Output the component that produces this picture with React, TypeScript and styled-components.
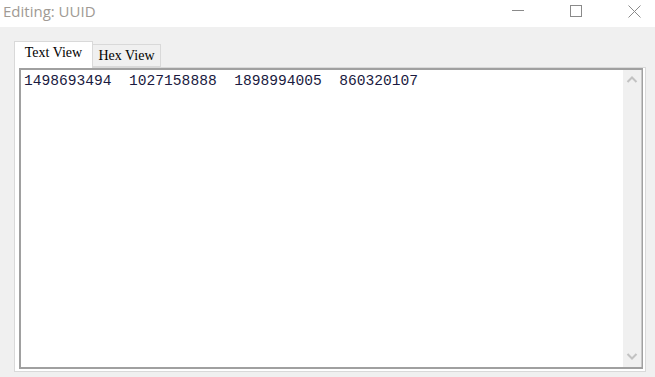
import React from 'react';
import styled, { createGlobalStyle } from 'styled-components';

const GlobalStyle = createGlobalStyle`
	html, body {
		margin: 0;
		padding: 0;
		background: #f0f0f0;
	}
`;

const values = ['1498693494', '1027158888', '1898994005', '860320107'];

const App = () => {
	return (
		<>
			<GlobalStyle />
			<Window>
				<TitleBar>
					<Title>Editing: UUID</Title>
					<Controls>
						<ControlButton aria-label="minimize">
							<svg width="12" height="12" viewBox="0 0 12 12">
								<line x1="0" y1="5.5" x2="12" y2="5.5" stroke="#8a8a8a" strokeWidth="1" />
							</svg>
						</ControlButton>
						<ControlButton aria-label="maximize">
							<svg width="12" height="12" viewBox="0 0 12 12">
								<rect x="0.5" y="0.5" width="11" height="11" fill="none" stroke="#8a8a8a" strokeWidth="1" />
							</svg>
						</ControlButton>
						<ControlButton aria-label="close">
							<svg width="13" height="13" viewBox="0 0 13 13">
								<path d="M0.5 0.5 L12.5 12.5 M12.5 0.5 L0.5 12.5" stroke="#8a8a8a" strokeWidth="1" />
							</svg>
						</ControlButton>
					</Controls>
				</TitleBar>
				<Body>
					<TabRow>
						<Tab active>Text View</Tab>
						<Tab>Hex View</Tab>
					</TabRow>
					<Panel>
						<EditBox>
							<TextArea>
								{values.map((v) => (
									<Value key={v}>{v}</Value>
								))}
							</TextArea>
							<ScrollBar>
								<svg width="18" height="18" viewBox="0 0 18 18">
									<path d="M4.5 11 L9 6.5 L13.5 11" fill="none" stroke="#c2c2c2" strokeWidth="2" />
								</svg>
								<svg width="18" height="18" viewBox="0 0 18 18">
									<path d="M4.5 7 L9 11.5 L13.5 7" fill="none" stroke="#c2c2c2" strokeWidth="2" />
								</svg>
							</ScrollBar>
						</EditBox>
					</Panel>
				</Body>
			</Window>
		</>
	);
};

const Window = styled('div')({
	width: '655px',
	height: '377px',
	background: '#f0f0f0',
	display: 'flex',
	flexDirection: 'column',
	overflow: 'hidden',
});

const TitleBar = styled('div')({
	height: '27px',
	background: '#ffffff',
	display: 'flex',
	alignItems: 'center',
	justifyContent: 'space-between',
	paddingLeft: '3px',
	flexShrink: 0,
});

const Title = styled('span')({
	fontFamily: '"Open Sans", "Noto Sans", sans-serif',
	fontSize: '15px',
	color: '#a09a94',
	marginTop: '-6px',
});

const Controls = styled('div')({
	display: 'flex',
	height: '100%',
	alignItems: 'flex-start',
	gap: '18px',
	paddingRight: '1px',
});

const ControlButton = styled.span`
	width: 40px;
	height: 22px;
	display: flex;
	align-items: center;
	justify-content: center;
`;

const Body = styled('div')({
	flex: 1,
	display: 'flex',
	flexDirection: 'column',
	padding: '14px 9px 5px 14px',
});

const TabRow = styled('div')({
	display: 'flex',
	alignItems: 'flex-end',
	height: '26px',
	position: 'relative',
	zIndex: 1,
});

const Tab = styled.div<{ active?: boolean }>`
	font-family: 'Liberation Serif', 'Times New Roman', serif;
	font-size: 14px;
	color: #000;
	box-sizing: border-box;
	border: 1px solid #d9d9d9;
	border-bottom: ${(props) => (props.active ? 'none' : '1px solid #d9d9d9')};
	border-left: ${(props) => (props.active ? '1px solid #d9d9d9' : 'none')};
	background: ${(props) => (props.active ? '#ffffff' : '#f0f0f0')};
	height: ${(props) => (props.active ? '27px' : '23px')};
	margin-bottom: ${(props) => (props.active ? '-1px' : '0')};
	width: ${(props) => (props.active ? '79px' : '68px')};
	padding-top: 3px;
	text-align: center;
`;

const Panel = styled('div')({
	flex: 1,
	display: 'flex',
	background: '#ffffff',
	border: '1px solid #d9d9d9',
	padding: '0 2px 2px 4px',
	boxSizing: 'border-box',
});

const EditBox = styled('div')({
	flex: 1,
	display: 'flex',
	borderTop: '2px solid #a0a0a0',
	borderLeft: '2px solid #a0a0a0',
	borderRight: '1px solid #a0a0a0',
	borderBottom: '2px solid #a0a0a0',
	boxShadow: 'inset -1px 0 0 #c8c8c8',
	background: '#ffffff',
});

const TextArea = styled('div')({
	flex: 1,
	padding: '3px 3px',
	fontFamily: '"Liberation Mono", "Courier New", monospace',
	fontSize: '14.6px',
	lineHeight: '17px',
	color: '#1a1a40',
	whiteSpace: 'pre',
});

const Value = styled('span')({
	marginRight: '17.5px',
});

const ScrollBar = styled('div')({
	width: '18px',
	background: '#f0f0f0',
	display: 'flex',
	flexDirection: 'column',
	justifyContent: 'space-between',
	padding: '1px 0 2px',
	marginRight: '1px',
});

export default App;
